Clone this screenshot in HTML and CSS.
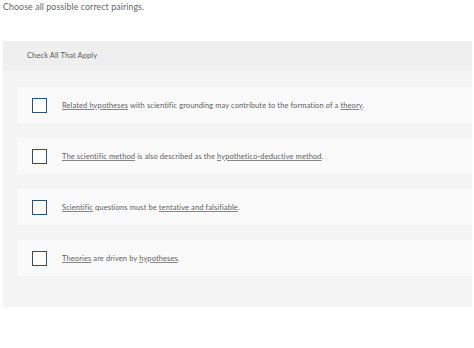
FILE: index.html
```html
<!DOCTYPE html>
<html lang="en">
<head>
    <meta charset="UTF-8">
    <meta name="viewport" content="width=device-width, initial-scale=1.0">
    <title>Check All That Apply</title>
    <link rel="stylesheet" href="styles.css">
</head>
<body>
    <p class="prompt">Choose all possible correct pairings.</p>
    <div class="panel">
        <div class="panel-head">Check All That Apply</div>
        <div class="choices">
            <label class="choice">
                <span class="box"></span>
                <span class="text"><u>Related hypotheses</u> with scientific grounding may contribute to the formation of a <u>theory</u>.</span>
            </label>
            <label class="choice">
                <span class="box"></span>
                <span class="text"><u>The scientific method</u> is also described as the <u>hypothetico-deductive method</u>.</span>
            </label>
            <label class="choice">
                <span class="box"></span>
                <span class="text"><u>Scientific</u> questions must be <u>tentative and falsifiable</u>.</span>
            </label>
            <label class="choice">
                <span class="box"></span>
                <span class="text"><u>Theories</u> are driven by <u>hypotheses</u>.</span>
            </label>
        </div>
    </div>
</body>
</html>
```

FILE: styles.css
```css
body { margin: 0; padding: 0 2px 0 3px; background: #fff; color: #666; font-family: Lato, "Open Sans", Arial, sans-serif; }
.prompt { margin: 0; padding-top: 1px; height: 40px; font-size: 8.8px; color: #666; letter-spacing: 0.1px; }
.panel { background: #f4f4f4; }
.panel-head { height: 29px; line-height: 29px; padding-left: 24px; font-size: 7.5px; color: #5a5a5a; background: #efefef; letter-spacing: 0.1px; }
.choices { display: flex; flex-direction: column; gap: 15px; padding: 17px 0 31px 14px; }
.choice { display: flex; align-items: center; height: 36px; background: #fafafa; cursor: pointer; }
.box { width: 13px; height: 13px; margin: 0 15px 0 15px; border: 1.5px solid #2e516e; background: #fff; }
.text { font-size: 7.5px; color: #5e5e5e; letter-spacing: 0.1px; }
.text u { text-decoration-color: #888; }
```
